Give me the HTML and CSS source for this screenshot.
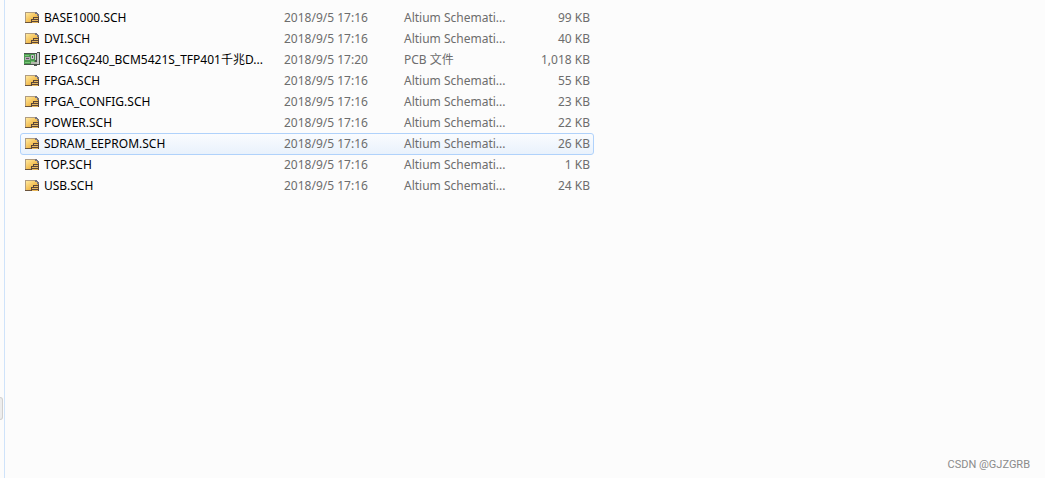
FILE: index.html
```html
<!DOCTYPE html>
<html lang="zh-CN">
<head>
    <meta charset="utf-8">
    <title>SCH</title>
    <link rel="stylesheet" href="styles.css">
</head>
<body>
    <svg class="defs" width="0" height="0" aria-hidden="true">
        <defs>
            <linearGradient id="gold" x1="0" y1="0" x2="1" y2="1">
                <stop offset="0" stop-color="#ffe9a0"/>
                <stop offset="0.5" stop-color="#f5c45c"/>
                <stop offset="1" stop-color="#d99a2b"/>
            </linearGradient>
            <symbol id="sch" viewBox="0 0 16 16">
                <path d="M1 2h12v1h1v1h1v9H1z" fill="#6b543c"/>
                <path d="M1 2h11v1H1zM1 3h1v9H1z" fill="#b09c80"/>
                <path d="M2 3h10v1h1v2h1v6H2z" fill="url(#gold)"/>
                <path d="M11 2h2v1h1v1h1v2h-2V4h-2z" fill="#777480"/>
                <path d="M9 7h6v6H7V9h2z" fill="#5a463a"/>
                <path d="M10 8h4v1h-4zM8 10h6v1H8zM8 12h6v1H8z" fill="#e8b85c"/>
            </symbol>
            <symbol id="pcb" viewBox="0 0 16 16">
                <path d="M0 1h13V0h3v13h-3v1h-3v-1H0z" fill="#4a544d"/>
                <path d="M0 2h11v10H0z" fill="#4c9b50"/>
                <path d="M1 3h4v1H1zM1 10h5v1H1zM7 9h3v1H7z" fill="#79c778"/>
                <path d="M1 5h5v3H1z" fill="#b9a9b9"/>
                <path d="M2 6h3v1H2z" fill="#5c575e"/>
                <path d="M7 3h3v4H7z" fill="#c5bfc6"/>
                <path d="M8 4h1v2H8z" fill="#555"/>
                <path d="M11 2h1v6h-1zM13 1h2v11h-2z" fill="#c9c9cb"/>
                <path d="M7 10h6v2H7z" fill="#b2b5aa"/>
            </symbol>
        </defs>
    </svg>

    <div class="explorer">
        <div class="nav"><div class="thumb"></div></div>
        <main class="content">
            <table class="files" aria-label="文件">
                <colgroup>
                    <col class="col-name">
                    <col class="col-date">
                    <col class="col-type">
                    <col class="col-size">
                </colgroup>
                <tbody>
                    <tr><td><div class="name"><svg class="icon"><use href="#sch"/></svg>BASE1000.SCH</div></td><td>2018/9/5 17:16</td><td>Altium Schemati...</td><td class="filesize">99 KB</td></tr>
                    <tr><td><div class="name"><svg class="icon"><use href="#sch"/></svg>DVI.SCH</div></td><td>2018/9/5 17:16</td><td>Altium Schemati...</td><td class="filesize">40 KB</td></tr>
                    <tr><td><div class="name"><svg class="icon"><use href="#pcb"/></svg>EP1C6Q240_BCM5421S_TFP401千兆D...</div></td><td>2018/9/5 17:20</td><td>PCB 文件</td><td class="filesize">1,018 KB</td></tr>
                    <tr><td><div class="name"><svg class="icon"><use href="#sch"/></svg>FPGA.SCH</div></td><td>2018/9/5 17:16</td><td>Altium Schemati...</td><td class="filesize">55 KB</td></tr>
                    <tr><td><div class="name"><svg class="icon"><use href="#sch"/></svg>FPGA_CONFIG.SCH</div></td><td>2018/9/5 17:16</td><td>Altium Schemati...</td><td class="filesize">23 KB</td></tr>
                    <tr><td><div class="name"><svg class="icon"><use href="#sch"/></svg>POWER.SCH</div></td><td>2018/9/5 17:16</td><td>Altium Schemati...</td><td class="filesize">22 KB</td></tr>
                    <tr class="hover"><td><div class="name"><svg class="icon"><use href="#sch"/></svg>SDRAM_EEPROM.SCH</div></td><td>2018/9/5 17:16</td><td>Altium Schemati...</td><td class="filesize">26 KB</td></tr>
                    <tr><td><div class="name"><svg class="icon"><use href="#sch"/></svg>TOP.SCH</div></td><td>2018/9/5 17:16</td><td>Altium Schemati...</td><td class="filesize">1 KB</td></tr>
                    <tr><td><div class="name"><svg class="icon"><use href="#sch"/></svg>USB.SCH</div></td><td>2018/9/5 17:16</td><td>Altium Schemati...</td><td class="filesize">24 KB</td></tr>
                </tbody>
            </table>
            <footer class="watermark">CSDN @GJZGRB</footer>
        </main>
    </div>
</body>
</html>
```

FILE: styles.css
```css
* {
    box-sizing: border-box;
}
body {
    margin: 0;
    background: #fcfcfc;
    color: #6d6d6d;
    font-family: "Noto Sans", "Noto Sans CJK SC", sans-serif;
    font-size: 12px;
    line-height: 21px;
}
.defs {
    display: block;
}
.explorer {
    display: flex;
    min-height: 100vh;
}

/* edge of the navigation pane */
.nav {
    width: 5px;
    border-right: 1px solid #cfe3fa;
    display: flex;
    flex-direction: column;
    justify-content: flex-end;
    padding-bottom: 58px;
}
.thumb {
    width: 3px;
    height: 23px;
    border: 1px solid #d0d0d0;
    border-left: 0;
    border-radius: 0 3px 3px 0;
    background: #ededed;
}

.content {
    flex: 1;
    display: flex;
    flex-direction: column;
    justify-content: space-between;
    padding: 7px 15px 3px;
}

/* file list */
.files {
    width: 574px;
    table-layout: fixed;
    border-collapse: separate;
    border-spacing: 0;
}
.col-name {
    width: 260px;
}
.col-date,
.col-type {
    width: 120px;
}
.col-size {
    width: 74px;
}
.files td {
    height: 21px;
    padding: 0 4px;
    white-space: nowrap;
}
.files td.filesize {
    text-align: right;
}
.name {
    display: flex;
    align-items: center;
    gap: 4px;
    color: #000;
}
.icon {
    width: 16px;
    height: 16px;
    flex: none;
}
.hover {
    position: relative;
}
.hover::after {
    content: "";
    position: absolute;
    inset: 0 0 -1px 0;
    z-index: -1;
    border: 1px solid #b0d2fb;
    border-radius: 3px;
    background: linear-gradient(#fafcfe, #e9f2fc);
}

.watermark {
    align-self: flex-end;
    font-family: Roboto, sans-serif;
    font-size: 11px;
    color: #8b8b8b;
}
```
